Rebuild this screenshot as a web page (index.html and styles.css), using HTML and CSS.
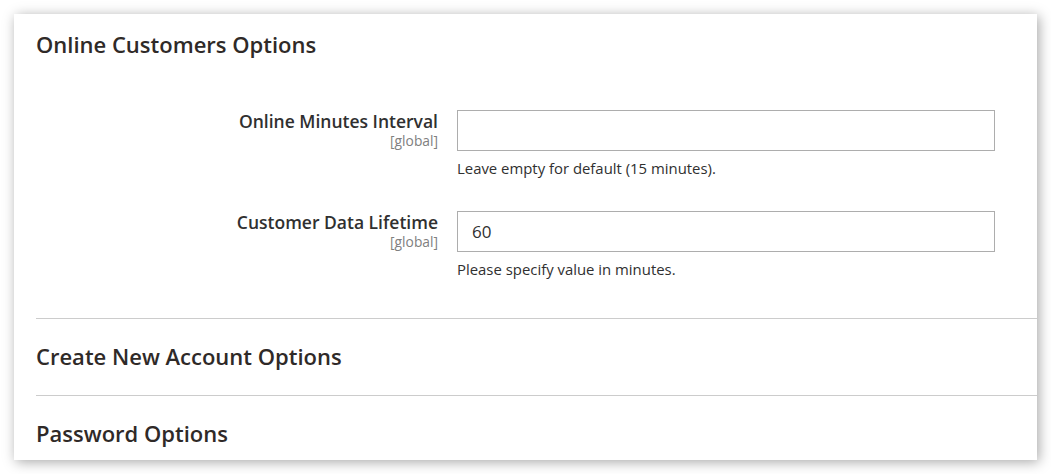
FILE: index.html
```html
<!DOCTYPE html>
<html>
<head>
<meta charset="utf-8">
<link rel="stylesheet" href="styles.css">
</head>
<body>
<div class="panel">
  <section class="section first">
    <h2 class="section-title">Online Customers Options</h2>
    <div class="fields">
      <div class="field">
        <div class="label">
          <div class="label-name">Online Minutes Interval</div>
          <div class="label-scope">[global]</div>
        </div>
        <div class="control">
          <input class="input" type="text" value="">
          <div class="note">Leave empty for default (15 minutes).</div>
        </div>
      </div>
      <div class="field">
        <div class="label">
          <div class="label-name">Customer Data Lifetime</div>
          <div class="label-scope">[global]</div>
        </div>
        <div class="control">
          <input class="input" type="text" value="60">
          <div class="note">Please specify value in minutes.</div>
        </div>
      </div>
    </div>
  </section>
  <section class="section collapsed">
    <h2 class="section-title">Create New Account Options</h2>
  </section>
  <section class="section collapsed">
    <h2 class="section-title">Password Options</h2>
  </section>
</div>
</body>
</html>
```
FILE: styles.css
```css
html, body {
  margin: 0;
  padding: 0;
  background: #ffffff;
}
body {
  padding: 14px;
  font-family: "Open Sans", "Noto Sans", sans-serif;
  color: #303030;
}
.panel {
  width: 1023px;
  height: 446px;
  box-sizing: border-box;
  background: #ffffff;
  box-shadow: 2px 2px 12px rgba(0, 0, 0, 0.35);
  padding-left: 22px;
  overflow: hidden;
}
.section-title {
  margin: 0;
  font-size: 22px;
  line-height: 30px;
  font-weight: 600;
  color: #2f2a28;
}
.section.first {
  padding-top: 15px;
  padding-bottom: 39px;
}
.section.collapsed {
  border-top: 1px solid #cccccc;
  padding: 22px 0 24px 0;
}
.fields {
  padding-top: 51px;
  display: flex;
  flex-direction: column;
  gap: 33px;
}
.field {
  display: grid;
  grid-template-columns: 402px 538px;
  column-gap: 19px;
}
.label {
  text-align: right;
}
.label-name {
  font-size: 17.5px;
  line-height: 22px;
  font-weight: 600;
  color: #303030;
}
.label-scope {
  font-size: 13.8px;
  line-height: 18px;
  color: #808080;
}
.input {
  display: block;
  width: 538px;
  height: 41px;
  box-sizing: border-box;
  border: 1px solid #adadad;
  border-radius: 0;
  padding: 0 14px;
  margin: 0;
  font-family: "Open Sans", "Noto Sans", sans-serif;
  font-size: 17px;
  color: #303030;
  background: #ffffff;
  outline: none;
}
.note {
  margin-top: 7px;
  font-size: 14.9px;
  line-height: 20px;
  color: #303030;
}
```
